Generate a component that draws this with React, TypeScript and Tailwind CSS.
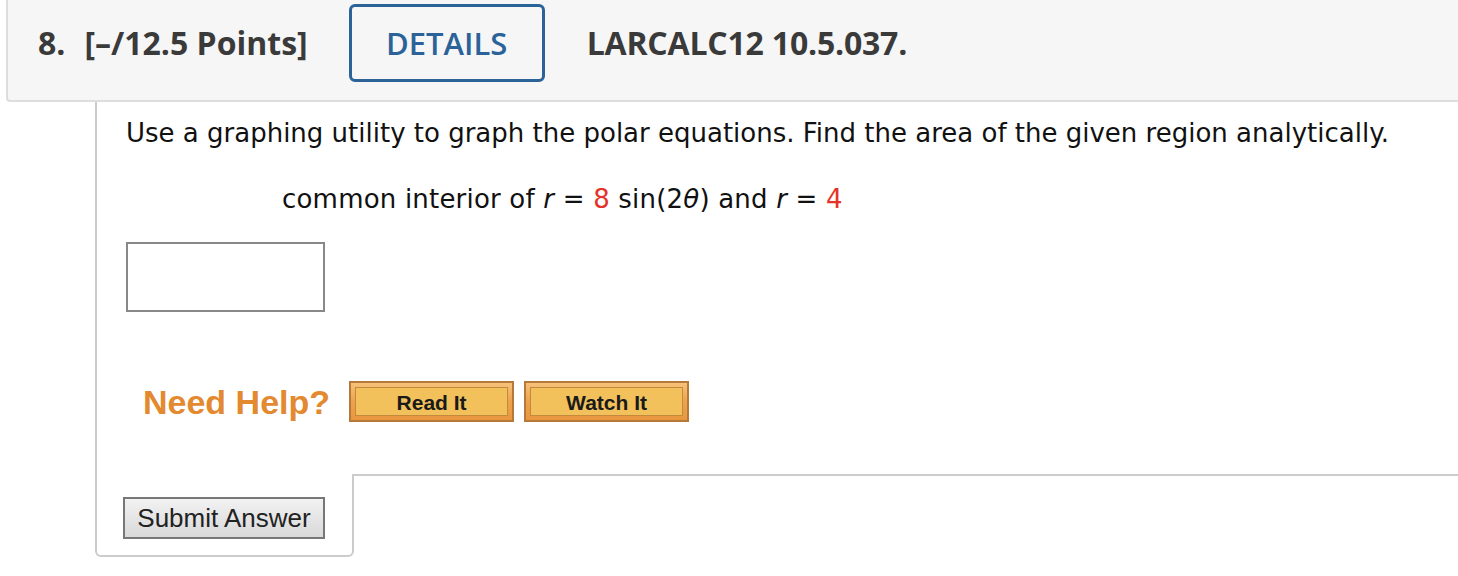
const HELP = ["Read It", "Watch It"];

function HelpButton({ label }: { label: string }) {
  return (
    <div className="flex h-[41px] w-[165px] items-center justify-center border-2 border-[#b5793a] bg-gradient-to-b from-[#f6c27a] via-[#eda24c] to-[#e9973f] p-[4px]">
      <div className="flex h-full w-full items-center justify-center border border-[#c48a3c] bg-[#f2c15b] pt-[2px] text-[21px] font-bold leading-none text-[#1a1a1a] [font-family:'Liberation_Sans',Arial,sans-serif]">
        {label}
      </div>
    </div>
  );
}

export default function App() {
  return (
    <div className="h-[576px] w-[1458px] overflow-hidden bg-white">
      {/* question header */}
      <div className="ml-[6px] flex h-[102px] items-center rounded-bl-[4px] border-b-2 border-l-2 border-[#dddddd] bg-[#f6f6f6] pl-[30px] text-[#3a3a3a] [font-family:'Open_Sans',sans-serif]">
        <div className="flex items-center pb-[16px] pt-[2px]">
          <span className="text-[32px] font-bold">8.</span>
          <span className="ml-[19px] text-[32px] font-bold">[–/12.5 Points]</span>
          <div className="ml-[41px] flex h-[78px] w-[196px] items-center justify-center rounded-[6px] border-[3px] border-[#2b6399] text-[31px] font-semibold text-[#2b6399]">
            DETAILS
          </div>
          <span className="ml-[42px] text-[32px] font-bold tracking-[-0.2px]">LARCALC12 10.5.037.</span>
        </div>
      </div>

      {/* question body */}
      <div className="ml-[95px] flex flex-col border-l-2 border-[#cccccc] pb-[52px] pl-[29px] pt-[15px] text-[26px] text-[#111] [font-family:'DejaVu_Sans',Verdana,sans-serif]">
        <p className="leading-[32px]">
          Use a graphing utility to graph the polar equations. Find the area of the given region analytically.
        </p>
        <p className="ml-[156px] mt-[34px] leading-[32px] tracking-[0.2px]">
          common interior of <i>r</i> = <span className="text-[#e5332a]">8</span> sin(2<i>θ</i>) and <i>r</i> ={" "}
          <span className="text-[#e5332a]">4</span>
        </p>
        <div className="mt-[27px] h-[70px] w-[199px] border-2 border-[#888888] bg-white" />
        <div className="mt-[69px] flex h-[41px] items-center">
          <span className="ml-[17px] text-[34px] font-bold leading-none text-[#e3892f] [font-family:'Liberation_Sans',Arial,sans-serif]">
            Need Help?
          </span>
          <div className="ml-[19px] flex gap-[10px]">
            {HELP.map((h) => (
              <HelpButton key={h} label={h} />
            ))}
          </div>
        </div>
      </div>

      {/* submit strip */}
      <div className="flex">
        <div className="ml-[95px] flex h-[83px] w-[259px] items-start rounded-b-[6px] border-x-2 border-b-2 border-[#cccccc] pl-[26px] pt-[23px]">
          <button className="flex h-[42px] w-[202px] items-center justify-center border-2 border-[#777777] bg-gradient-to-b from-[#f2f2f2] to-[#d9d9d9] text-[26px] leading-none text-[#222] [font-family:'Liberation_Sans',Arial,sans-serif]">
            Submit Answer
          </button>
        </div>
        <div className="flex-1 border-t-2 border-[#cccccc]" />
      </div>
    </div>
  );
}
